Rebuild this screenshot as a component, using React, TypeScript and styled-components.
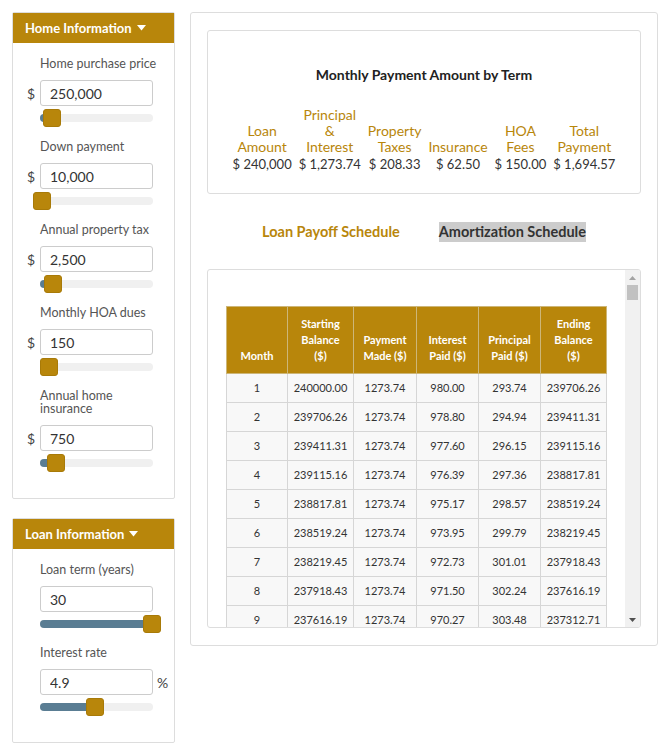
import * as React from 'react'
import styled, { createGlobalStyle } from 'styled-components'

const gold = '#b8860b'

const GlobalStyle = createGlobalStyle`
  body {
    margin: 0;
    background: #fff;
    font-family: Lato, 'Open Sans', Arial, sans-serif;
    color: #333;
  }
`

const Page = styled.div`
  display: flex;
  align-items: flex-start;
  gap: 15px;
  padding: 12px;
`

const Sidebar = styled.div`
  width: 163px;
  display: flex;
  flex-direction: column;
  gap: 19px;
`

const Panel = styled.div`
  border: 1px solid #ddd;
  border-radius: 2px;
  background: white;
`

const PanelHeader = styled.div`
  height: 30px;
  background: ${gold};
  color: white;
  font-weight: 700;
  font-size: 13px;
  display: flex;
  align-items: center;
  padding-left: 12px;
  gap: 5px;
`

const PanelBody = styled.div`
  padding: 14px 0 13px 14px;
`

const Field = styled.div`
  display: grid;
  grid-template-columns: 13px 113px 1fr;
  margin-bottom: 10px;
`

const Label = styled.div`
  grid-column: 2 / 4;
  max-width: 118px;
  font-size: 12.5px;
  line-height: 13px;
  color: #555;
  margin-bottom: 10px;
`

const Prefix = styled.div`
  grid-column: 1;
  font-size: 14px;
  color: #444;
  display: flex;
  align-items: center;
`

const Suffix = styled.div`
  grid-column: 3;
  font-size: 14px;
  color: #444;
  display: flex;
  align-items: center;
  padding-left: 4px;
`

const Input = styled.input`
  grid-column: 2;
  box-sizing: border-box;
  width: 113px;
  height: 26px;
  border: 1px solid #ccc;
  border-radius: 3px;
  padding: 0 0 0 9px;
  font-family: inherit;
  font-size: 14px;
  color: #333;
  outline: none;
`

const SliderRow = styled.div`
  grid-column: 2;
  height: 24px;
  display: flex;
  align-items: center;
`

const Track = styled.div`
  position: relative;
  width: 113px;
  height: 8px;
  border-radius: 4px;
  background: #f0f0f0;
`

const Fill = styled.div<{ $width: number }>`
  width: ${p => p.$width}px;
  height: 100%;
  border-radius: 4px;
  background: #5a7d93;
`

const Thumb = styled.div<{ $left: number }>`
  position: absolute;
  top: -5px;
  left: ${p => p.$left}px;
  width: 18px;
  height: 18px;
  box-sizing: border-box;
  border-radius: 3px;
  background: ${gold};
  border: 1px solid #a87a08;
`

const Caret = () => (
  <svg width="9" height="6" viewBox="0 0 9 6">
    <path d="M0 0 H9 L4.5 5.5 Z" fill="white" />
  </svg>
)

interface InputFieldProps {
  label: string
  value: string
  thumb: number
  prefix?: string
  suffix?: string
}

const InputField: React.FC<InputFieldProps> = ({ label, value, thumb, prefix, suffix }) => (
  <Field>
    <Label>{label}</Label>
    <Prefix>{prefix}</Prefix>
    <Input defaultValue={value} />
    {suffix && <Suffix>{suffix}</Suffix>}
    <SliderRow>
      <Track>
        <Fill $width={Math.max(thumb + 9, 0)} />
        <Thumb $left={thumb} />
      </Track>
    </SliderRow>
  </Field>
)

const Main = styled.div`
  width: 468px;
  box-sizing: border-box;
  border: 1px solid #ddd;
  border-radius: 3px;
  padding: 17px 16px 17px 16px;
`

const SummaryBox = styled.div`
  border: 1px solid #ddd;
  border-radius: 3px;
  padding: 35px 0 20px;
  display: flex;
  flex-direction: column;
  align-items: center;
`

const SummaryTitle = styled.div`
  font-size: 14px;
  font-weight: 700;
  line-height: 18px;
  color: #222;
  margin-bottom: 23px;
`

const SummaryTable = styled.table`
  border-collapse: collapse;
`

const SummaryHead = styled.th`
  font-weight: 400;
  font-size: 14px;
  line-height: 16px;
  color: ${gold};
  vertical-align: bottom;
  text-align: center;
  padding: 0 3.5px;
`

const SummaryValue = styled.td`
  font-size: 13px;
  line-height: 18px;
  color: #333;
  text-align: center;
  padding: 0 3.5px;
  white-space: nowrap;
`

const Tabs = styled.div`
  display: flex;
  justify-content: center;
  gap: 39px;
  margin: 28px 0 27px;
`

const Tab = styled.div<{ $active?: boolean }>`
  font-size: 14.5px;
  font-weight: 700;
  line-height: 20px;
  color: ${p => (p.$active ? '#333' : gold)};
  background: ${p => (p.$active ? '#ccc' : 'transparent')};
`

const ScheduleBox = styled.div`
  height: 359px;
  box-sizing: border-box;
  border: 1px solid #ddd;
  border-radius: 3px;
  display: flex;
  overflow: hidden;
`

const ScrollArea = styled.div`
  flex: 1;
  overflow: hidden;
  padding: 36px 0 0 18px;
`

const ScrollBar = styled.div`
  width: 15px;
  background: #f1f1f1;
  display: flex;
  flex-direction: column;
  align-items: center;
`

const ArrowButton = styled.div<{ $down?: boolean }>`
  height: 15px;
  width: 15px;
  display: flex;
  align-items: center;
  justify-content: center;
  margin-top: ${p => (p.$down ? 'auto' : '0')};
`

const ScrollThumb = styled.div`
  width: 11px;
  height: 15px;
  background: #c1c1c1;
`

const Schedule = styled.table`
  border-collapse: collapse;
  width: 380px;
  table-layout: fixed;
`

const HeadCell = styled.th<{ $width: number }>`
  box-sizing: border-box;
  width: ${p => p.$width}px;
  background: ${gold};
  color: white;
  font-size: 11px;
  font-weight: 700;
  line-height: 16px;
  padding: 9px 2px;
  vertical-align: bottom;
  text-align: center;
  border: 1px solid #cdb678;
`

const Cell = styled.td`
  background: #f8f8f8;
  font-size: 11px;
  line-height: 16px;
  color: #333;
  height: 29px;
  box-sizing: border-box;
  padding: 0 2px;
  text-align: center;
  border: 1px solid #d6d6d6;
`

const columns = [
  { title: ['Month'], width: 61 },
  { title: ['Starting', 'Balance', '($)'], width: 66 },
  { title: ['Payment', 'Made ($)'], width: 63 },
  { title: ['Interest', 'Paid ($)'], width: 62 },
  { title: ['Principal', 'Paid ($)'], width: 62 },
  { title: ['Ending', 'Balance', '($)'], width: 66 }
]

const rows = [
  ['1', '240000.00', '1273.74', '980.00', '293.74', '239706.26'],
  ['2', '239706.26', '1273.74', '978.80', '294.94', '239411.31'],
  ['3', '239411.31', '1273.74', '977.60', '296.15', '239115.16'],
  ['4', '239115.16', '1273.74', '976.39', '297.36', '238817.81'],
  ['5', '238817.81', '1273.74', '975.17', '298.57', '238519.24'],
  ['6', '238519.24', '1273.74', '973.95', '299.79', '238219.45'],
  ['7', '238219.45', '1273.74', '972.73', '301.01', '237918.43'],
  ['8', '237918.43', '1273.74', '971.50', '302.24', '237616.19'],
  ['9', '237616.19', '1273.74', '970.27', '303.48', '237312.71']
]

const summary = [
  { label: ['Loan', 'Amount'], value: '$ 240,000' },
  { label: ['Principal', '&', 'Interest'], value: '$ 1,273.74' },
  { label: ['Property', 'Taxes'], value: '$ 208.33' },
  { label: ['Insurance'], value: '$ 62.50' },
  { label: ['HOA', 'Fees'], value: '$ 150.00' },
  { label: ['Total', 'Payment'], value: '$ 1,694.57' }
]

const lines = (parts: string[]) =>
  parts.map((p, i) => (
    <React.Fragment key={i}>
      {i > 0 && <br />}
      {p}
    </React.Fragment>
  ))

export default function App() {
  return (
    <Page>
      <GlobalStyle />
      <Sidebar>
        <Panel>
          <PanelHeader>
            Home Information <Caret />
          </PanelHeader>
          <PanelBody>
            <InputField label="Home purchase price" prefix="$" value="250,000" thumb={3} />
            <InputField label="Down payment" prefix="$" value="10,000" thumb={-7} />
            <InputField label="Annual property tax" prefix="$" value="2,500" thumb={4} />
            <InputField label="Monthly HOA dues" prefix="$" value="150" thumb={0} />
            <InputField label="Annual home insurance" prefix="$" value="750" thumb={7} />
          </PanelBody>
        </Panel>
        <Panel>
          <PanelHeader>
            Loan Information <Caret />
          </PanelHeader>
          <PanelBody>
            <InputField label="Loan term (years)" value="30" thumb={103} />
            <InputField label="Interest rate" value="4.9" suffix="%" thumb={46} />
          </PanelBody>
        </Panel>
      </Sidebar>
      <Main>
        <SummaryBox>
          <SummaryTitle>Monthly Payment Amount by Term</SummaryTitle>
          <SummaryTable>
            <thead>
              <tr>
                {summary.map(s => (
                  <SummaryHead key={s.value}>{lines(s.label)}</SummaryHead>
                ))}
              </tr>
            </thead>
            <tbody>
              <tr>
                {summary.map(s => (
                  <SummaryValue key={s.value}>{s.value}</SummaryValue>
                ))}
              </tr>
            </tbody>
          </SummaryTable>
        </SummaryBox>
        <Tabs>
          <Tab>Loan Payoff Schedule</Tab>
          <Tab $active>Amortization Schedule</Tab>
        </Tabs>
        <ScheduleBox>
          <ScrollArea>
            <Schedule>
              <thead>
                <tr>
                  {columns.map(c => (
                    <HeadCell key={c.title.join()} $width={c.width}>
                      {lines(c.title)}
                    </HeadCell>
                  ))}
                </tr>
              </thead>
              <tbody>
                {rows.map(r => (
                  <tr key={r[0]}>
                    {r.map((v, i) => (
                      <Cell key={i}>{v}</Cell>
                    ))}
                  </tr>
                ))}
              </tbody>
            </Schedule>
          </ScrollArea>
          <ScrollBar>
            <ArrowButton>
              <svg width="7" height="4" viewBox="0 0 7 4">
                <path d="M0 4 L3.5 0 L7 4 Z" fill="#a3a3a3" />
              </svg>
            </ArrowButton>
            <ScrollThumb />
            <ArrowButton $down>
              <svg width="7" height="4" viewBox="0 0 7 4">
                <path d="M0 0 L7 0 L3.5 4 Z" fill="#505050" />
              </svg>
            </ArrowButton>
          </ScrollBar>
        </ScheduleBox>
      </Main>
    </Page>
  )
}
